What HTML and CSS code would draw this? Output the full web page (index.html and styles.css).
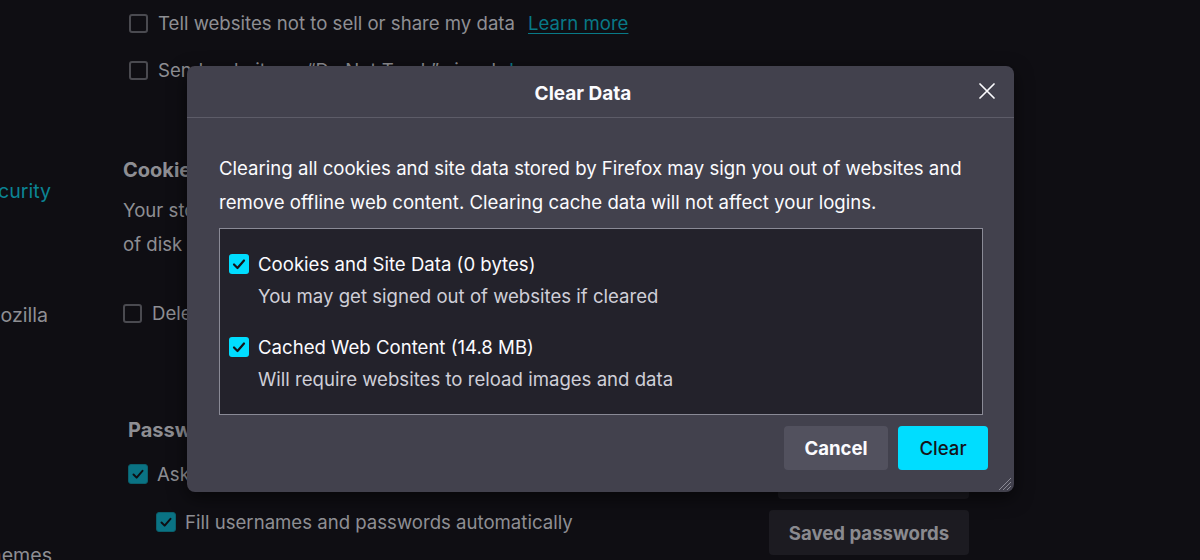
FILE: index.html
```html
<!DOCTYPE html>
<html lang="en">
<head>
<meta charset="utf-8">
<title>Clear Data</title>
<link rel="stylesheet" href="styles.css">
</head>
<body>
<div class="page">
  <nav class="sidebar">
    <div class="nav-item nav-active nav-privacy"><span>Privacy &amp; Security</span></div>
    <div class="nav-item nav-mozilla"><span>More from Mozilla</span></div>
    <div class="nav-item nav-themes"><span>Extensions &amp; Themes</span></div>
  </nav>
  <main class="main">
    <div class="bg-row indent first">
      <span class="bg-box"></span>
      <span>Tell websites not to sell or share my data</span>
      <a class="bg-link">Learn more</a>
    </div>
    <div class="bg-row indent second">
      <span class="bg-box"></span>
      <span>Send websites a “Do Not Track” signal</span>
      <a class="bg-link">Learn more</a>
    </div>
    <h2 class="bg-heading cookies">Cookies and Site Data</h2>
    <p class="bg-para">Your stored cookies, site data, and cache are currently using 14.8 MB<br>of disk space. Learn more</p>
    <div class="bg-row delete">
      <span class="bg-box"></span>
      <span>Delete cookies and site data when Firefox is closed</span>
    </div>
    <section class="pw-section">
      <div class="pw-left">
        <h2 class="bg-heading pw-heading">Passwords</h2>
        <div class="bg-row ask">
          <span class="bg-box checked"><svg viewBox="0 0 20 20"><path d="M5 10.5 L8.5 14 L15 6.5"/></svg></span>
          <span>Ask to save passwords</span>
        </div>
        <div class="bg-row sub fill">
          <span class="bg-box checked"><svg viewBox="0 0 20 20"><path d="M5 10.5 L8.5 14 L15 6.5"/></svg></span>
          <span>Fill usernames and passwords automatically</span>
        </div>
        <div class="bg-row sub next">
          <span class="bg-box checked"><svg viewBox="0 0 20 20"><path d="M5 10.5 L8.5 14 L15 6.5"/></svg></span>
          <span>Suggest strong passwords</span>
        </div>
      </div>
      <div class="pw-right">
        <button class="bg-btn exceptions">Exceptions…</button>
        <button class="bg-btn saved">Saved passwords</button>
      </div>
    </section>
  </main>
</div>

<div class="dialog" role="dialog" aria-label="Clear Data">
  <header class="dlg-header">
    <div class="dlg-title">Clear Data</div>
    <button class="dlg-close" aria-label="Close">
      <svg viewBox="0 0 16 16"><path d="M1 1 L15 15 M15 1 L1 15"/></svg>
    </button>
  </header>
  <div class="dlg-body">
    <p class="dlg-desc">Clearing all cookies and site data stored by Firefox may sign you out of websites and remove offline web content. Clearing cache data will not affect your logins.</p>
    <div class="dlg-list">
      <div class="dlg-item">
        <div class="dlg-check-row">
          <span class="cbox"><svg viewBox="0 0 20 20"><path d="M5 10.5 L8.5 14 L15 6.5"/></svg></span>
          <span class="dlg-label">Cookies and Site Data (0 bytes)</span>
        </div>
        <div class="dlg-sub">You may get signed out of websites if cleared</div>
      </div>
      <div class="dlg-item">
        <div class="dlg-check-row">
          <span class="cbox"><svg viewBox="0 0 20 20"><path d="M5 10.5 L8.5 14 L15 6.5"/></svg></span>
          <span class="dlg-label">Cached Web Content (14.8 MB)</span>
        </div>
        <div class="dlg-sub">Will require websites to reload images and data</div>
      </div>
    </div>
  </div>
  <footer class="dlg-footer">
    <button class="btn btn-cancel">Cancel</button>
    <button class="btn btn-clear">Clear</button>
  </footer>
  <span class="grip"><svg viewBox="0 0 16 16"><path d="M15 3 L3 15 M15 7 L7 15 M15 11 L11 15"/></svg></span>
</div>
</body>
</html>
```

FILE: styles.css
```css
* { box-sizing: border-box; }

html, body {
  margin: 0;
  padding: 0;
  width: 1200px;
  height: 560px;
  overflow: hidden;
  background: #0f0e13;
  font-family: "Inter", "Noto Sans", sans-serif;
  font-size: 18.6px;
  color: #8e8e93;
}

.page {
  display: flex;
  width: 1200px;
  height: 560px;
  overflow: hidden;
}

/* Sidebar (mostly off-screen to the left) */
.sidebar {
  flex: none;
  width: 123px;
  display: flex;
  flex-direction: column;
  font-size: 19.6px;
}

.sidebar > * { flex: none; }

.nav-item {
  display: flex;
  justify-content: flex-end;
  white-space: nowrap;
  width: 51px;
  line-height: 34px;
}

.nav-active { color: #0b8494; }
.nav-privacy { margin-top: 174px; }
.nav-mozilla { margin-top: 90px; width: 48px; }
.nav-themes { margin-top: 206px; width: 52px; }

/* Main background content */
.main {
  flex: none;
  width: 846px;
  display: flex;
  flex-direction: column;
}

.main > * { flex: none; }

.bg-row {
  display: flex;
  align-items: center;
  height: 34px;
  white-space: nowrap;
  flex: none;
}

.bg-row.indent { margin-left: 6px; }
.bg-row.first { margin-top: 6px; }
.bg-row.second { margin-top: 13px; }
.bg-row.delete { margin-top: 35px; }

.bg-box {
  flex: none;
  width: 19px;
  height: 19px;
  border: 2px solid #4a4a50;
  border-radius: 3px;
  margin-right: 10px;
  display: flex;
}

.bg-box.checked {
  width: 20px;
  height: 20px;
  border: 1px solid #0a5f6c;
  background: #0a7384;
}

.bg-box svg {
  width: 100%;
  height: 100%;
  fill: none;
  stroke: #0f0e13;
  stroke-width: 2.2;
  stroke-linecap: round;
  stroke-linejoin: round;
}

.bg-link {
  margin-left: 13px;
  color: #087987;
  text-decoration: underline;
  text-underline-offset: 3px;
}

.bg-heading {
  margin: 0;
  font-size: 20px;
  font-weight: 700;
  line-height: 34px;
  color: #8e8e93;
}

.bg-heading.cookies { margin-top: 66px; }

.bg-para {
  margin: 6px 0 0;
  line-height: 34px;
  white-space: nowrap;
}

.pw-section {
  display: flex;
  justify-content: space-between;
  margin-top: 83px;
  margin-left: 5px;
}

.pw-left {
  display: flex;
  flex-direction: column;
}

.pw-left > * { flex: none; }

.pw-left .bg-row.ask { margin-top: 10px; }
.pw-left .bg-row.sub { margin-left: 28px; }
.pw-left .bg-row.fill { margin-top: 14px; }
.pw-left .bg-row.next { margin-top: 14px; }
.pw-left .bg-row .bg-box.checked { margin-right: 9px; }

.pw-right {
  display: flex;
  flex-direction: column;
  align-items: flex-end;
  gap: 11px;
  padding-top: 41px;
}

.bg-btn {
  flex: none;
  font-family: inherit;
  font-size: 18.6px;
  font-weight: 700;
  color: #8a8a8f;
  background: #1c1b21;
  border: none;
  border-radius: 4px;
  height: 45px;
  padding: 0;
  white-space: nowrap;
}

.bg-btn.exceptions { width: 191px; }
.bg-btn.saved { width: 200px; }

/* Dialog */
.dialog {
  position: absolute;
  left: 187px;
  top: 66px;
  width: 827px;
  height: 426px;
  background: #42414d;
  border-radius: 8px;
  box-shadow: 0 6px 18px rgba(0, 0, 0, 0.55);
  color: #fbfbfe;
  display: flex;
  flex-direction: column;
}

.dialog > * { flex: none; }

.dlg-header {
  display: flex;
  align-items: center;
  height: 52px;
  border-bottom: 1px solid #5d5c68;
  padding-right: 19px;
}

.dlg-title {
  flex: 1;
  text-align: center;
  font-weight: 700;
  font-size: 19px;
  padding-top: 4px;
}

.dlg-close {
  flex: none;
  width: 16px;
  height: 16px;
  padding: 0;
  border: none;
  background: none;
  display: flex;
  margin-bottom: 2px;
}

.dlg-close svg {
  width: 16px;
  height: 16px;
  fill: none;
  stroke: #fbfbfe;
  stroke-width: 1.7;
  stroke-linecap: round;
}

.dlg-body {
  padding: 33px 31px 0 32px;
}

.dlg-desc {
  margin: 0;
  line-height: 34px;
}

.dlg-list {
  margin-top: 9px;
  height: 187px;
  background: #23222b;
  border: 1px solid #8a8a96;
  padding: 19px 9px 19px;
  display: flex;
  flex-direction: column;
  gap: 19px;
}

.dlg-check-row {
  display: flex;
  align-items: center;
  height: 32px;
}

.cbox {
  flex: none;
  width: 20px;
  height: 20px;
  border-radius: 3px;
  background: #00ddff;
  margin-right: 9px;
  display: flex;
}

.cbox svg {
  width: 20px;
  height: 20px;
  fill: none;
  stroke: #15141a;
  stroke-width: 2.2;
  stroke-linecap: round;
  stroke-linejoin: round;
}

.dlg-sub {
  padding-left: 29px;
  line-height: 32px;
  color: #cfcfd8;
}

.dlg-footer {
  display: flex;
  justify-content: flex-end;
  gap: 10px;
  padding: 11px 26px 0 0;
}

.btn {
  font-family: inherit;
  font-size: 18.6px;
  height: 44px;
  border: none;
  border-radius: 4px;
  padding: 0;
}

.btn-cancel {
  width: 104px;
  background: #52515e;
  color: #fbfbfe;
  font-weight: 700;
}

.btn-clear {
  width: 90px;
  background: #00ddff;
  color: #15141a;
  font-weight: 500;
}

.grip {
  position: absolute;
  right: 2px;
  bottom: 1px;
  width: 16px;
  height: 16px;
  display: flex;
}

.grip svg {
  width: 16px;
  height: 16px;
  fill: none;
  stroke: #8b8a95;
  stroke-width: 1;
}
```
